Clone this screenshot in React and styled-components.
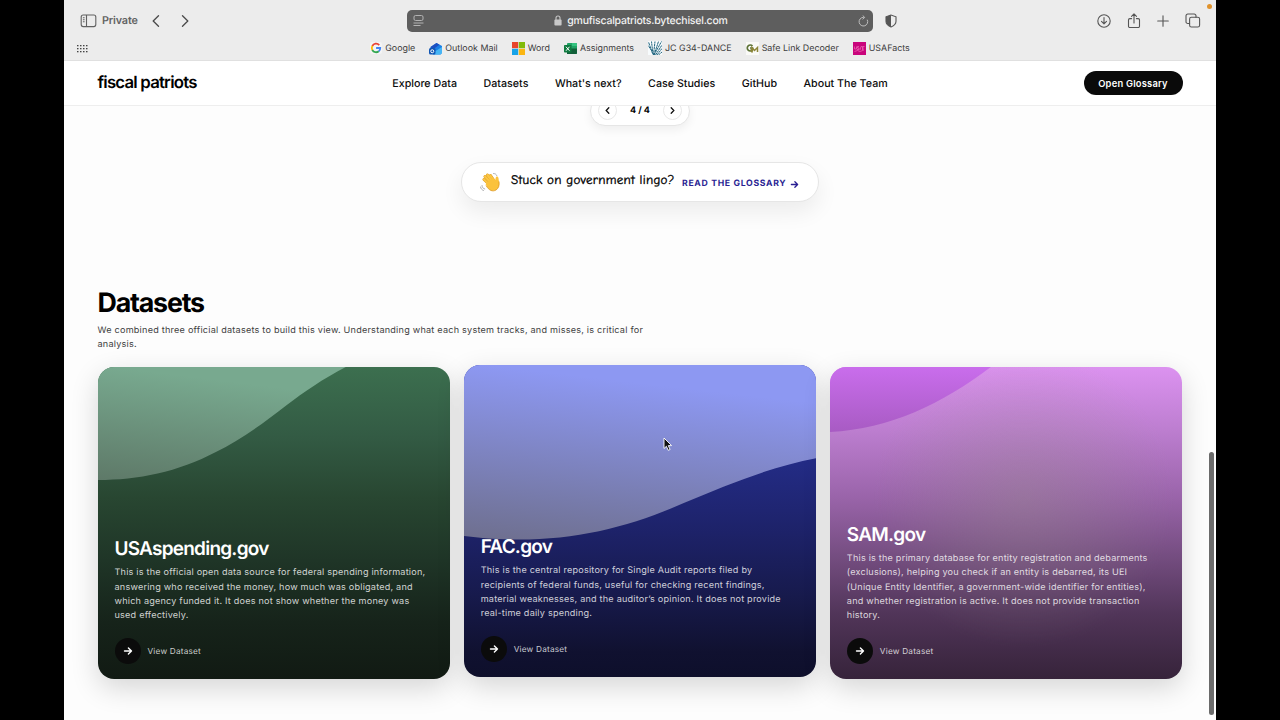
import React from 'react';
import styled, { createGlobalStyle } from 'styled-components';

const bookmarks = [
  { label: 'Google', icon: 'google' },
  { label: 'Outlook Mail', icon: 'outlook' },
  { label: 'Word', icon: 'microsoft' },
  { label: 'Assignments', icon: 'excel' },
  { label: 'JC G34-DANCE', icon: 'dance' },
  { label: 'Safe Link Decoder', icon: 'safelink' },
  { label: 'USAFacts', icon: 'usafacts' },
];

const navLinks = ['Explore Data', 'Datasets', "What's next?", 'Case Studies', 'GitHub', 'About The Team'];

const datasets = [
  {
    id: 'usa',
    title: 'USAspending.gov',
    lines: [
      'This is the official open data source for federal spending information,',
      'answering who received the money, how much was obligated, and',
      'which agency funded it. It does not show whether the money was',
      'used effectively.',
    ],
    wave: 'M0 0H248C225 12 206 25 189 38C161 60 140 74 118 85C80 105 40 113 0 113Z',
    waveColors: ['#78a98f', '#5e7968'],
    waveStart: 14,
    waveEnd: 113,
    background:
      'linear-gradient(180deg, #3c6f4f 0%, #335b44 22%, #284631 42%, #1f3527 62%, #16231a 82%, #111a13 100%)',
  },
  {
    id: 'fac',
    title: 'FAC.gov',
    raised: true,
    lines: [
      'This is the central repository for Single Audit reports filed by',
      'recipients of federal funds, useful for checking recent findings,',
      'material weaknesses, and the auditor’s opinion. It does not provide',
      'real-time daily spending.',
    ],
    wave: 'M0 0H353V93C310 101 265 119 220 138C155 167 85 182 0 171Z',
    waveColors: ['#8d98f2', '#6e6f8e'],
    waveStart: 20,
    waveEnd: 174,
    background:
      'linear-gradient(180deg, #2b35a0 0%, #232b84 32%, #1d2268 54%, #171a4c 74%, #101130 92%, #0e0f2b 100%)',
  },
  {
    id: 'sam',
    title: 'SAM.gov',
    lines: [
      'This is the primary database for entity registration and debarments',
      '(exclusions), helping you check if an entity is debarred, its UEI',
      '(Unique Entity Identifier, a government-wide identifier for entities),',
      'and whether registration is active. It does not provide transaction',
      'history.',
    ],
    wave: 'M0 0H161C112 37 60 62 0 65Z',
    waveColors: ['#c96dec', '#a85bc3'],
    waveStart: 0,
    waveEnd: 65,
    background:
      'radial-gradient(ellipse 150px 150px at 55% 42%, rgba(150, 140, 140, 0.38), rgba(150, 140, 140, 0) 100%), linear-gradient(180deg, #dc92f0 0%, #bd7ed0 20%, #9b65ab 41%, #764e82 60%, #513559 79%, #36233a 100%)',
  },
];

function BookmarkIcon({ name }) {
  switch (name) {
    case 'google':
      return (
        <svg width="12" height="12" viewBox="0 0 24 24">
          <rect width="24" height="24" rx="5" fill="#f4f4f4" />
          <g fill="none" strokeWidth="3.6">
            <path d="M18.500 6.200A8.400 8.400 0 0 0 4.600 8" stroke="#ea4335" />
            <path d="M4.700 7.800a8.600 8.600 0 0 0 0 8.400" stroke="#fbbc05" />
            <path d="M4.600 16a8.600 8.600 0 0 0 13 2.600" stroke="#34a853" />
            <path d="M12.200 12h8.300a8.600 8.600 0 0 1-3 6.600" stroke="#4285f4" />
          </g>
        </svg>
      );
    case 'outlook':
      return (
        <svg width="13" height="13" viewBox="0 0 26 26">
          <path d="M3 10 15 2l11 6v14l-3 3H8l-5-5z" fill="#1a7fe6" />
          <path d="M3 10 15 2l6 3.500L6 16z" fill="#1d4fc0" />
          <path d="m10 20 16-10v12l-3 3H10z" fill="#45b5f5" />
          <rect y="12" width="13" height="13" rx="3" fill="#1156b4" />
          <circle cx="6.500" cy="18.500" r="3" fill="none" stroke="#fff" strokeWidth="2" />
        </svg>
      );
    case 'microsoft':
      return (
        <svg width="13" height="13" viewBox="0 0 13 13">
          <path d="M0 0h6.200v6.200H0z" fill="#e8442b" />
          <path d="M6.800 0H13v6.200H6.800z" fill="#80bb0a" />
          <path d="M0 6.800h6.200V13H0z" fill="#18a3e8" />
          <path d="M6.800 6.800H13V13H6.800z" fill="#fbb612" />
        </svg>
      );
    case 'excel':
      return (
        <svg width="13" height="13" viewBox="0 0 26 26">
          <rect x="6" y="2" width="20" height="22" rx="2" fill="#20a366" />
          <path d="M16 2h8a2 2 0 0 1 2 2v4H16z" fill="#35c481" />
          <path d="M6 13h20v9a2 2 0 0 1-2 2H6z" fill="#12603a" />
          <rect y="6" width="15" height="15" rx="1.500" fill="#0f7a40" />
          <path d="m4 9.500 7 8m0-8-7 8" stroke="#fff" strokeWidth="2" />
        </svg>
      );
    case 'dance':
      return (
        <svg width="14" height="14" viewBox="0 0 28 28">
          <rect width="28" height="28" fill="#f7fbfd" />
          <g stroke="#21657f" strokeWidth="2" strokeDasharray="5 0.8">
            <path d="M12 28 27 1M12 28 21 1M11 28 14 1M10 27 7 1M9 25 1 2M8 20 0 9M15 28 28 8M18 28 28 15M21 28l7-6" />
          </g>
        </svg>
      );
    case 'safelink':
      return (
        <svg width="13" height="13" viewBox="0 0 26 26">
          <rect width="26" height="26" fill="#fafaf7" />
          <path d="M13 8A6 6 0 1 0 13 16v-4H8" fill="none" stroke="#5e7338" strokeWidth="3.400" />
          <path d="M12 20v-9l5 6 6-6v9M9 15l4 6" fill="none" stroke="#8c8538" strokeWidth="3" />
        </svg>
      );
    default:
      return (
        <svg width="13" height="13" viewBox="0 0 26 26">
          <rect width="26" height="26" fill="#c9057c" />
          <path d="M3 9v5h4V9m5 0H9v3h3v3H8m6 1 2-7h3v7m4-7h-3v7M3 19l6-2 5 2 8-3" fill="none" stroke="#ef72b8" strokeWidth="1.300" />
        </svg>
      );
  }
}

function WaveHand() {
  return (
    <svg width="20" height="20" viewBox="0 0 40 40" fill="none">
      <g stroke="#d9941c" strokeWidth="6" strokeLinecap="round">
        <path d="M19 25 8 15" />
        <path d="M22 22 10 9" />
        <path d="M25 20 15 6" />
        <path d="m29 19-8-12" />
      </g>
      <g stroke="#fbc642" strokeWidth="4.400" strokeLinecap="round">
        <path d="M19 25 8 15" />
        <path d="M22 22 10 9" />
        <path d="M25 20 15 6" />
        <path d="m29 19-8-12" />
      </g>
      <path d="m11 24 15-12c3 1 4 3 5 4 0-3 0-7 3-7 3.500 0 3 5 4 10 1.500 8-1 14-6 17-8 4-15 1-21-12z" fill="#fbc23c" />
      <path d="M12 27c6 10 13 13 20 9 5-3 7-9 6-17" stroke="#dd981f" strokeWidth="1.600" />
      <path d="M27 3c3.500 0 5.500 1.500 6.500 4M4 27c0 3.500 2 6 5.500 7M1 30c1 4 3 6 6 7" stroke="#9a9c9e" strokeWidth="1.600" strokeLinecap="round" />
    </svg>
  );
}

function Arrow({ size = 10 }) {
  return (
    <svg width={size} height={size} viewBox="0 0 10 10" fill="none" stroke="currentColor" strokeWidth="1.4" strokeLinecap="round" strokeLinejoin="round">
      <path d="M1.500 5h7M5.400 1.900 8.500 5 5.400 8.100" />
    </svg>
  );
}

function DatasetCard({ item }) {
  return (
    <Card $background={item.background} $raised={item.raised}>
      <Wave viewBox="0 0 353 312" preserveAspectRatio="none">
        <defs>
          <linearGradient id={item.id} gradientUnits="userSpaceOnUse" x1={item.waveStart} y1="0" x2="0" y2={item.waveEnd}>
            <stop stopColor={item.waveColors[0]} />
            <stop offset="1" stopColor={item.waveColors[1]} />
          </linearGradient>
        </defs>
        <path d={item.wave} fill={`url(#${item.id})`} />
      </Wave>
      <CardBody>
        <CardTitle>{item.title}</CardTitle>
        <CardText>
          {item.lines.map((line) => (
            <span key={line}>{line}</span>
          ))}
        </CardText>
        <CardLink>
          <RoundArrow>
            <Arrow />
          </RoundArrow>
          View Dataset
        </CardLink>
      </CardBody>
    </Card>
  );
}

export default function App() {
  return (
    <Screen>
      <GlobalStyle />
      <Browser>
        <Chrome>
          <Toolbar>
            <ToolGroup>
              <svg width="17" height="14" viewBox="0 0 17 14" fill="none" stroke="#616161" strokeWidth="1.100">
                <rect x="1.200" y="1" width="14.600" height="11.600" rx="2" />
                <path d="M6.500 1v11.600M2.900 3.700h1.700M2.900 5.700h1.700M2.900 7.700h1.700" />
              </svg>
              <PrivateLabel>Private</PrivateLabel>
              <ToolArrow viewBox="0 0 8 12">
                <path d="M6.500 0.700 1.200 6l5.300 5.300" />
              </ToolArrow>
              <ToolArrow viewBox="0 0 8 12" $next>
                <path d="m1.500 0.700 5.300 5.300-5.300 5.300" />
              </ToolArrow>
            </ToolGroup>
            <AddressBar>
              <svg width="11" height="13" viewBox="0 0 11 13" fill="none" stroke="#b3b3b3" strokeWidth="1">
                <rect x="1" y="1.500" width="9" height="5" rx="1.500" />
                <path d="M0.500 9h10M0.500 11.500h7" />
              </svg>
              <Address>
                <svg width="8" height="11" viewBox="0 0 8 11">
                  <rect x="0.400" y="4.500" width="7.200" height="6" rx="1" fill="#c8c8c8" />
                  <path d="M2 5V3a2 2 0 0 1 4 0v2" fill="none" stroke="#c8c8c8" strokeWidth="1.100" />
                </svg>
                gmufiscalpatriots.bytechisel.com
              </Address>
              <svg width="11" height="12" viewBox="0 0 11 12" fill="none" stroke="#bdbdbd" strokeWidth="1">
                <path d="M9.200 4.700A4.300 4.300 0 1 1 5.300 2.400h1M4.700 0.500l2 1.900-2 2" />
              </svg>
            </AddressBar>
            <Shield viewBox="0 0 12 14">
              <path d="M6 1 1 2.800v4.500C1 10 3.500 12 6 13c2.500-1 5-3 5-5.700V2.800z" fill="none" stroke="#555" strokeWidth="1.100" />
              <path d="M6 1 1 2.800v4.500C1 10 3.500 12 6 13z" fill="#555" />
            </Shield>
            <Actions>
              <svg width="14" height="14" viewBox="0 0 14 14">
                <circle cx="7" cy="7" r="6.200" />
                <path d="M7 3.600v6.200M4.500 7.400 7 9.900l2.500-2.500" />
              </svg>
              <svg width="14" height="16" viewBox="0 0 14 16">
                <path d="M4.600 5.600H2.800a1.300 1.300 0 0 0-1.300 1.300v6.300a1.300 1.300 0 0 0 1.300 1.300h8.400a1.300 1.300 0 0 0 1.300-1.300V6.900a1.300 1.300 0 0 0-1.300-1.300H9.400M7 10V1M4.500 3.400 7 0.900l2.500 2.500" />
              </svg>
              <svg width="12" height="12" viewBox="0 0 12 12">
                <path d="M6 0.700v10.600M0.700 6h10.600" />
              </svg>
              <svg width="16" height="15" viewBox="0 0 16 15">
                <path d="M4.600 10.500H2.800A1.800 1.800 0 0 1 1 8.700V2.800A1.800 1.800 0 0 1 2.800 1h6.400A1.800 1.800 0 0 1 11 2.800v1.400" />
                <rect x="4.600" y="4.200" width="10" height="9.800" rx="1.800" />
              </svg>
            </Actions>
          </Toolbar>
          <BookmarkBar>
            <svg width="11" height="9" viewBox="0 0 11 9" fill="#444">
              {[1, 4, 7].map((y) =>
                [0, 3, 6, 9].map((x) => <rect key={`${x}-${y}`} x={x} y={y} width="1.500" height="1.300" />)
              )}
            </svg>
            <BookmarkList>
              {bookmarks.map((item) => (
                <Bookmark key={item.label}>
                  <BookmarkIcon name={item.icon} />
                  {item.label}
                </Bookmark>
              ))}
            </BookmarkList>
          </BookmarkBar>
          <RecordingDot />
        </Chrome>
        <SiteHeader>
          <Brand>fiscal patriots</Brand>
          <Nav>
            {navLinks.map((link) => (
              <NavLink key={link}>{link}</NavLink>
            ))}
          </Nav>
          <GlossaryButton>Open Glossary</GlossaryButton>
        </SiteHeader>
        <Page>
          <Pager>
            <PagerButton>
              <svg width="5" height="7" viewBox="0 0 5 7">
                <path d="M3.800 0.800 1.200 3.500l2.600 2.700" />
              </svg>
            </PagerButton>
            4 / 4
            <PagerButton>
              <svg width="5" height="7" viewBox="0 0 5 7">
                <path d="m1.200 0.800 2.600 2.700-2.600 2.700" />
              </svg>
            </PagerButton>
          </Pager>
          <Lingo>
            <WaveHand />
            <LingoText>Stuck on government lingo?</LingoText>
            <LingoLink>
              READ THE GLOSSARY
              <Arrow size={9} />
            </LingoLink>
          </Lingo>
          <Section>
            <Heading>Datasets</Heading>
            <Intro>
              We combined three official datasets to build this view. Understanding what each system tracks, and misses, is critical for
              <br />
              analysis.
            </Intro>
            <CardGrid>
              {datasets.map((item) => (
                <DatasetCard key={item.id} item={item} />
              ))}
            </CardGrid>
          </Section>
        </Page>
        <ScrollThumb />
      </Browser>
      <Cursor viewBox="0 0 10 15">
        <path d="M1 1v10.500l2.400-2.200 1.800 4 1.900-.8-1.800-3.900h3.300z" fill="#111" stroke="#fff" strokeWidth="0.900" />
      </Cursor>
    </Screen>
  );
}

const GlobalStyle = createGlobalStyle`
  * {
    box-sizing: border-box;
  }

  body {
    margin: 0;
    background: #000;
    font-family: Inter, "Liberation Sans", sans-serif;
    text-rendering: geometricPrecision;
  }

  svg {
    flex-shrink: 0;
    display: block;
  }
`;

const Screen = styled.div`
  position: relative;
  width: 1280px;
  height: 720px;
  padding: 0 64px;
  overflow: hidden;
  background: #000;
`;

const Browser = styled.div`
  position: relative;
  display: flex;
  flex-direction: column;
  height: 100%;
  background: #fdfdfd;
`;

const Chrome = styled.div`
  position: relative;
  height: 61px;
  flex-shrink: 0;
  background: #ececec;
  border-bottom: 1px solid #e0e0e0;
`;

const Toolbar = styled.div`
  display: flex;
  align-items: center;
  height: 41px;
  padding: 0 15px 0 16px;
`;

const ToolGroup = styled.div`
  display: flex;
  align-items: center;
  width: 327px;
`;

const PrivateLabel = styled.span`
  width: 50px;
  margin-left: 5px;
  color: #636363;
  font-size: 10.8px;
  font-weight: 600;
  letter-spacing: -0.15px;
`;

const ToolArrow = styled.svg`
  width: 8px;
  height: 12px;
  margin-left: ${(props) => (props.$next ? '21px' : '0')};
  fill: none;
  stroke: #4a4a4a;
  stroke-width: 1.3;
  stroke-linecap: round;
  stroke-linejoin: round;
`;

const AddressBar = styled.div`
  display: flex;
  align-items: center;
  justify-content: space-between;
  width: 466px;
  height: 22px;
  padding: 0 4px 0 6px;
  border-radius: 5px;
  background: #5e5e5e;
`;

const Address = styled.div`
  display: flex;
  align-items: center;
  gap: 5px;
  color: #f2f2f2;
  font-size: 10.5px;
  font-weight: 500;
  letter-spacing: -0.22px;
`;

const Shield = styled.svg`
  width: 12px;
  height: 14px;
  margin-left: 12px;
`;

const Actions = styled.div`
  display: flex;
  align-items: center;
  gap: 16px;
  margin-left: auto;

  svg {
    fill: none;
    stroke: #555;
    stroke-width: 1.1;
    stroke-linecap: round;
    stroke-linejoin: round;
  }
`;

const BookmarkBar = styled.div`
  display: grid;
  grid-template-columns: 20px 1fr 20px;
  align-items: center;
  height: 13px;
  padding: 0 13px;
`;

const BookmarkList = styled.div`
  display: flex;
  justify-content: center;
  gap: 14px;
`;

const Bookmark = styled.div`
  display: flex;
  align-items: center;
  gap: 3px;
  color: #3c3c3c;
  font-size: 8.9px;
  line-height: 13px;
  white-space: nowrap;
`;

const RecordingDot = styled.div`
  position: absolute;
  top: 4px;
  right: 4px;
  width: 5px;
  height: 5px;
  border-radius: 50%;
  background: #e0922c;
`;

const SiteHeader = styled.header`
  position: relative;
  z-index: 1;
  display: grid;
  grid-template-columns: 1fr auto 1fr;
  align-items: center;
  height: 45px;
  flex-shrink: 0;
  padding: 0 33.5px;
  background: #fff;
  border-bottom: 1px solid #eee;
`;

const Brand = styled.div`
  font-size: 16.8px;
  font-weight: 600;
  letter-spacing: -0.8px;
`;

const Nav = styled.nav`
  display: flex;
  gap: 26.5px;
`;

const NavLink = styled.a`
  color: #0c0c0c;
  font-size: 10.7px;
  font-weight: 500;
  white-space: nowrap;
`;

const GlossaryButton = styled.button`
  justify-self: end;
  width: 99px;
  height: 24px;
  padding: 0;
  border: 0;
  border-radius: 12px;
  background: #0a0a0a;
  color: #fff;
  font: 600 9.4px Inter, sans-serif;
  letter-spacing: 0.2px;
`;

const Page = styled.main`
  display: flex;
  flex-direction: column;
  flex: 1;
  min-height: 0;
  overflow: hidden;
  padding: 0 33.5px;
`;

const Pager = styled.div`
  display: flex;
  align-items: center;
  align-self: center;
  justify-content: space-between;
  flex-shrink: 0;
  width: 100px;
  height: 30px;
  margin-top: -10px;
  padding: 0 7px 1px;
  border: 1px solid #e6e6e6;
  border-radius: 15px;
  background: #fff;
  box-shadow: 0 4px 10px rgba(0, 0, 0, 0.06);
  font-size: 9px;
  font-weight: 700;
`;

const PagerButton = styled.span`
  display: flex;
  align-items: center;
  justify-content: center;
  width: 19px;
  height: 19px;
  border: 1px solid #e8e8e8;
  border-radius: 50%;

  svg {
    fill: none;
    stroke: #111;
    stroke-width: 1.3;
    stroke-linecap: round;
  }
`;

const Lingo = styled.div`
  display: flex;
  align-items: center;
  align-self: center;
  flex-shrink: 0;
  width: 358px;
  height: 40px;
  margin-top: 36px;
  padding: 0 18px;
  border: 1px solid #e6e6e6;
  border-radius: 20px;
  background: #fff;
  box-shadow: 0 10px 22px rgba(0, 0, 0, 0.07);
`;

const LingoText = styled.span`
  width: 163px;
  margin: 0 0 3px 11px;
  font-family: "Comic Neue", "Patrick Hand", cursive;
  font-size: 13px;
  font-weight: 500;
  letter-spacing: 0.28px;
  white-space: nowrap;
  -webkit-text-stroke: 0.35px #000;
`;

const LingoLink = styled.a`
  display: flex;
  align-items: center;
  gap: 4px;
  margin: 4px 0 0 8px;
  color: #2a1f93;
  font-size: 8.7px;
  font-weight: 700;
  letter-spacing: 0.68px;
  white-space: nowrap;
`;

const Section = styled.section`
  margin-top: 85px;
`;

const Heading = styled.h2`
  margin: 0;
  font-size: 26.8px;
  font-weight: 700;
  line-height: 32px;
  letter-spacing: -1.2px;
`;

const Intro = styled.p`
  margin: 5px 0 0;
  color: #3e3e3e;
  font-size: 9.1px;
  line-height: 14.4px;
  letter-spacing: 0.225px;
  white-space: nowrap;
`;

const CardGrid = styled.div`
  display: grid;
  grid-template-columns: repeat(3, 1fr);
  gap: 13.5px;
  margin-top: 14px;
`;

const Card = styled.article`
  position: relative;
  display: flex;
  flex-direction: column;
  justify-content: flex-end;
  height: 312px;
  margin-top: ${(props) => (props.$raised ? '-2px' : '0')};
  border-radius: 16px;
  overflow: hidden;
  background: ${(props) => props.$background};
  box-shadow: 0 9px 28px rgba(0, 0, 0, 0.16);
`;

const Wave = styled.svg`
  position: absolute;
  inset: 0;
  width: 100%;
  height: 100%;
`;

const CardBody = styled.div`
  position: relative;
  padding: 0 17px 14.5px;
  color: #fff;
`;

const CardTitle = styled.h3`
  margin: 0;
  font-size: 19px;
  font-weight: 600;
  line-height: 24px;
  letter-spacing: -0.77px;
`;

const CardText = styled.p`
  display: flex;
  flex-direction: column;
  margin: 5px 0 14.5px;
  color: rgba(255, 255, 255, 0.8);
  font-size: 9.1px;
  line-height: 14.4px;
  letter-spacing: 0.205px;
  white-space: nowrap;
`;

const CardLink = styled.a`
  display: flex;
  align-items: center;
  gap: 7px;
  color: rgba(255, 255, 255, 0.78);
  font-size: 8.2px;
  letter-spacing: 0.22px;
`;

const RoundArrow = styled.span`
  display: flex;
  align-items: center;
  justify-content: center;
  width: 26px;
  height: 26px;
  border-radius: 50%;
  background: #0b0b0b;
  color: #fff;
`;

const ScrollThumb = styled.div`
  position: absolute;
  top: 452px;
  right: 2px;
  width: 5px;
  height: 263px;
  border-radius: 3px;
  background: #6b6b6b;
`;

const Cursor = styled.svg`
  position: absolute;
  top: 437px;
  left: 663px;
  width: 10px;
  height: 15px;
`;
